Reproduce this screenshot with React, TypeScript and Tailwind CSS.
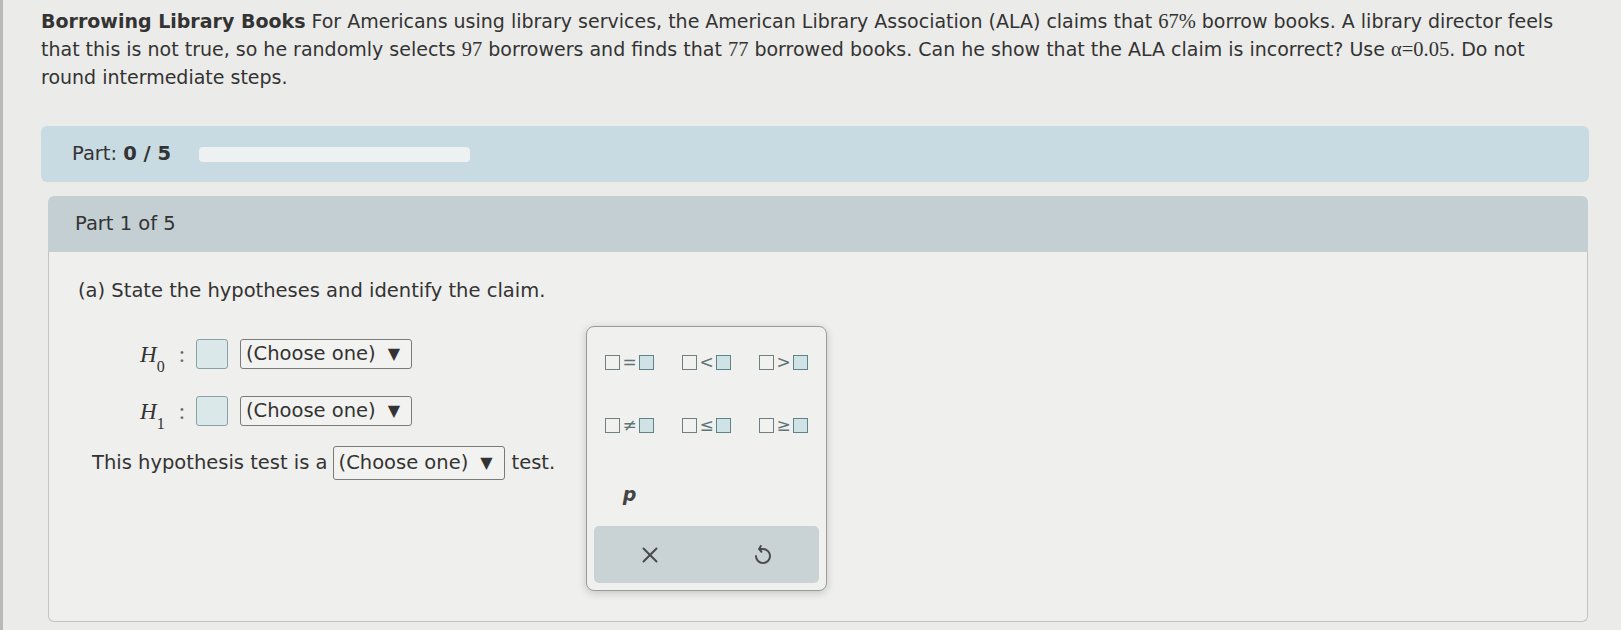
import { X } from "lucide-react";

const sans = "font-['DejaVu_Sans',Verdana,sans-serif]";
const serif = "font-['Liberation_Serif','Times_New_Roman',serif]";

function Num({ children }: { children: React.ReactNode }) {
  return <span className={`${serif} text-[20.5px]`}>{children}</span>;
}

function ChooseOne({ w }: { w: string }) {
  return (
    <div className={`${w} h-full flex items-center justify-between border border-[#7a7a7a] rounded-[3px] bg-[#f2f2f0] pl-[5px] pr-[11px] text-[19.5px] text-[#333]`}>
      <span>(Choose one)</span>
      <span className="text-[16px]">▼</span>
    </div>
  );
}

function Hyp({ sub }: { sub: string }) {
  return (
    <div className="flex items-center h-[30px]">
      <span className={`${serif} italic text-[23px] text-[#333] w-[46px] ml-[62px] leading-none whitespace-nowrap`}>
        H<sub className="not-italic text-[16px] align-[-6px]">{sub}</sub>
        <span className="not-italic ml-[14px] text-[#666]">:</span>
      </span>
      <div className="w-[32px] h-[30px] ml-[10px] border border-[#8aa0a4] rounded-[3px] bg-[#dbe8ea]" />
      <div className="ml-[12px] h-[30px]">
        <ChooseOne w="w-[172px]" />
      </div>
    </div>
  );
}

function Op({ op }: { op: string }) {
  return (
    <div className="flex items-center justify-center h-[20px] text-[#5f7378]">
      <span className="w-[15px] h-[15px] border-[1.5px] border-[#6f7f83] bg-[#f1f1ef]" />
      <span className={`${sans} text-[17px] px-[2px] leading-none`}>{op}</span>
      <span className="w-[15px] h-[15px] border-[1.5px] border-[#5f8389] bg-[#cfe2e6]" />
    </div>
  );
}

function UndoIcon() {
  return (
    <svg width="26" height="26" viewBox="0 0 24 24" fill="none" stroke="#4a4a4a" strokeWidth="1.8" strokeLinecap="round" strokeLinejoin="round">
      <path d="M8.5 6.5 H12 a6.5 6.5 0 1 1 -6.5 6.5" />
      <path d="M10 3.6 L8.5 6.5 L10.6 9" />
    </svg>
  );
}

export default function App() {
  return (
    <div className={`${sans} w-[1621px] h-[630px] overflow-hidden bg-[#ebebe9] border-l-[3px] border-[#b9bab8] text-[#333]`}>
      <p className="pl-[38px] pr-[38px] pt-[7px] text-[19px] leading-[28px]">
        <b>Borrowing Library Books</b> For Americans using library services, the American Library Association (ALA) claims that{" "}
        <Num>67%</Num> borrow books. A library director feels that this is not true, so he randomly selects <Num>97</Num> borrowers and
        finds that <Num>77</Num> borrowed books. Can he show that the ALA claim is incorrect? Use{" "}
        <Num>α=0.05</Num>. Do not round intermediate steps.
      </p>

      <div className="ml-[38px] mt-[35px] w-[1548px] h-[56px] rounded-[6px] bg-[#c8dae2] flex items-center pl-[31px] text-[19.5px]">
        <span>
          Part: <b>0 / 5</b>
        </span>
        <div className="ml-[28px] w-[271px] h-[15px] rounded-[4px] bg-[#eef1f2]" />
      </div>

      <div className="ml-[45px] mt-[14px] w-[1540px]">
        <div className="h-[56px] rounded-t-[6px] bg-[#c3cfd2] flex items-center pl-[27px] text-[19.5px]">Part 1 of 5</div>
        <div className="h-[370px] border border-t-0 border-[#c2c4c3] rounded-b-[6px] bg-[#efefed] flex">
          <div className="w-[537px] pl-[29px] pt-[27px]">
            <div className="text-[19.5px] leading-[24px]">(a) State the hypotheses and identify the claim.</div>
            <div className="mt-[36px]">
              <Hyp sub="0" />
            </div>
            <div className="mt-[27px]">
              <Hyp sub="1" />
            </div>
            <div className="mt-[20px] flex items-center h-[34px] text-[19.5px] whitespace-nowrap">
              <span className="ml-[14px]">This hypothesis test is a</span>
              <div className="ml-[5px] h-[34px]">
                <ChooseOne w="w-[172px]" />
              </div>
              <span className="ml-[7px]">test.</span>
            </div>
          </div>

          <div className="mt-[74px] w-[241px] h-[265px] rounded-[8px] border border-[#9a9c9b] bg-[#f0f0ee] shadow-[0_2px_8px_rgba(0,0,0,0.18)] flex flex-col">
            <div className="grid grid-cols-3 px-[4px] mt-[25px] gap-y-[43px]">
              <Op op="=" />
              <Op op="<" />
              <Op op=">" />
              <Op op="≠" />
              <Op op="≤" />
              <Op op="≥" />
            </div>
            <div className="grid grid-cols-3 px-[4px] mt-[49px]">
              <span className="text-center text-[19px] italic font-bold text-[#444] leading-[20px]">p</span>
            </div>
            <div className="mt-auto mb-[7px] mx-[7px] h-[57px] rounded-[5px] bg-[#c9d2d4] grid grid-cols-2 items-center">
              <div className="flex justify-center">
                <X size={26} strokeWidth={1.8} color="#4a4a4a" />
              </div>
              <div className="flex justify-center">
                <UndoIcon />
              </div>
            </div>
          </div>
        </div>
      </div>
    </div>
  );
}
